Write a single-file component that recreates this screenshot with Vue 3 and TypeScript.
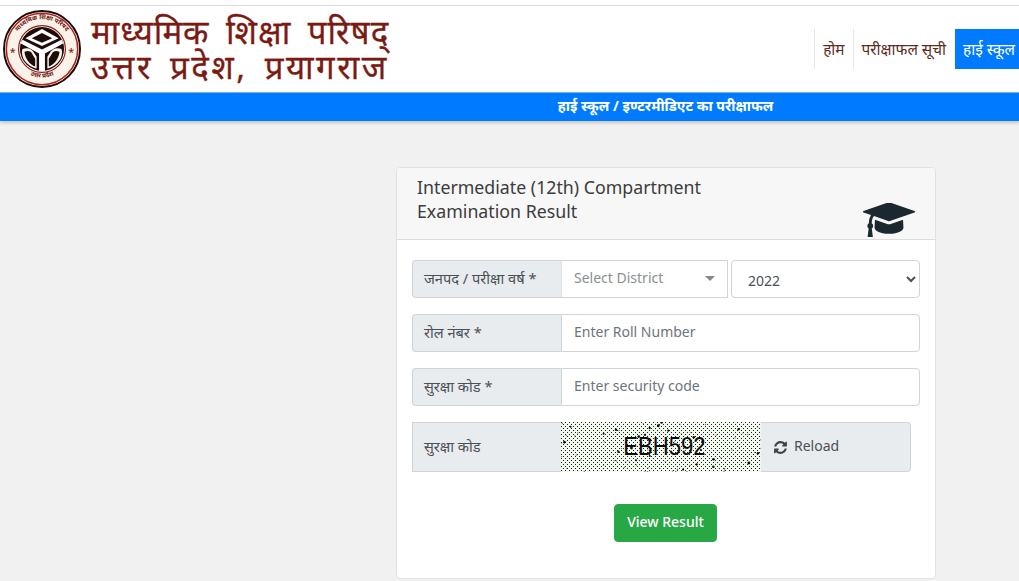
<script setup lang="ts">
import { computed } from 'vue'

type Speck = { x: number; y: number; r: number; o: number }

const specks = computed<Speck[]>(() => {
  const list: Speck[] = []
  let seed = 592
  const rnd = () => {
    seed = (seed * 16807) % 2147483647
    return seed / 2147483647
  }
  for (let i = 0; i < 90; i++) {
    const big = rnd() > 0.72
    list.push({ x: rnd() * 200, y: rnd() * 50, r: big ? 1.0 + rnd() * 0.5 : 0.7, o: big ? 1 : 0.5 })
  }
  return list
})
</script>

<template>
  <div class="page">
    <div class="topline"></div>
    <header class="masthead">
      <div class="brand">
        <svg class="emblem" viewBox="0 0 80 80" aria-hidden="true">
          <circle cx="40" cy="40" r="39" fill="#fff" stroke="#1c0c0a" stroke-width="2" />
          <circle cx="40" cy="40" r="36.6" fill="#fbf3ea" stroke="#b0241c" stroke-width="1.6" />
          <defs>
            <path id="arcTop" d="M9.500 40a30.500 30.500 0 0 1 61 0" />
            <path id="arcBottom" d="M11 47a30 30 0 0 0 58 0" />
          </defs>
          <text class="emblem-text"><textPath href="#arcTop" startOffset="50%" text-anchor="middle">माध्यमिक शिक्षा परिषद</textPath></text>
          <text class="emblem-text"><textPath href="#arcBottom" startOffset="50%" text-anchor="middle">उत्तर प्रदेश</textPath></text>
          <text x="7" y="47" class="star">*</text>
          <text x="67" y="47" class="star">*</text>
          <circle cx="40" cy="40" r="24" fill="#fff" stroke="#8c1a14" stroke-width="1.2" />
          <circle cx="40" cy="40" r="22.6" fill="#1d0d0a" />
          <path d="M23 29 40 19.500 57 29 40 37Z" fill="#fff" />
          <path d="M29.500 29 40 23.500 50.500 29 40 33.500Z" fill="#1d0d0a" />
          <path d="M18 34 37 44.500V62.500H43V44.500L62 34 60 30.500 40 40.500 20 30.500Z" fill="#fff" />
          <path d="M20 40c5-2 10 0 12 4l2.500 4v12c-6-1-12-6-14-11-1-3-1.500-6-.5-9Z" fill="#fbf3ea" />
          <path d="M60 40c-5-2-10 0-12 4l-2.500 4v12c6-1 12-6 14-11 1-3 1.500-6 .5-9Z" fill="#fbf3ea" />
          <path d="M22 43c3-2 7-1 8 2l3 5v8c-5-2-10-7-11-15ZM58 43c-3-2-7-1-8 2l-3 5v8c5-2 10-7 11-15Z" fill="#1d0d0a" />
        </svg>
        <div class="brand-name">
          <div class="brand-line first">माध्यमिक शिक्षा परिषद्</div>
          <div class="brand-line second">उत्तर प्रदेश, प्रयागराज</div>
        </div>
      </div>
      <nav class="nav">
        <a class="nav-item">होम</a>
        <a class="nav-item">परीक्षाफल सूची</a>
        <a class="nav-item active">हाई स्कूल</a>
      </nav>
    </header>
    <div class="banner"><span>हाई स्कूल / इण्टरमीडिएट का परीक्षाफल</span></div>

    <main class="main">
      <section class="card">
        <div class="card-head">
          <h1 class="card-title">Intermediate (12th) Compartment<br />Examination Result</h1>
          <svg class="cap" viewBox="0 160 2304 1376" preserveAspectRatio="none" aria-hidden="true">
            <path d="M1774 836l18 316q4 69-82 128t-235 93.500-323 34.500-323-34.500-235-93.500-82-128l18-316 574 181q22 7 48 7t48-7zm530-324q0 23-22 31l-1120 352q-4 1-10 1t-10-1l-652-206q-43 34-71 111.500t-34 178.500q63 36 63 109 0 69-58 107l58 433q2 14-8 25-9 11-24 11h-192q-15 0-24-11-10-11-8-25l58-433q-58-38-58-107 0-73 65-111 11-207 98-330l-333-104q-22-8-22-31t22-31l1120-352q4-1 10-1t10 1l1120 352q22 8 22 31z" />
          </svg>
        </div>
        <form class="card-body" @submit.prevent>
          <div class="row">
            <label class="addon">जनपद / परीक्षा वर्ष *</label>
            <div class="fake-select">
              <span>Select District</span>
              <i class="caret"></i>
            </div>
            <select class="year">
              <option>2022</option>
            </select>
          </div>
          <div class="row">
            <label class="addon">रोल नंबर *</label>
            <input class="field" placeholder="Enter Roll Number" />
          </div>
          <div class="row">
            <label class="addon">सुरक्षा कोड *</label>
            <input class="field" placeholder="Enter security code" />
          </div>
          <div class="row captcha-row">
            <label class="addon plain">सुरक्षा कोड</label>
            <div class="captcha">
              <svg class="specks" width="200" height="50" viewBox="0 0 200 50" aria-hidden="true">
                <defs>
                  <pattern id="captchaDots" width="4" height="4" patternUnits="userSpaceOnUse">
                    <rect x="0" y="0" width="1" height="1" fill="#16251a" />
                    <rect x="2" y="2" width="1" height="1" fill="#16251a" />
                  </pattern>
                </defs>
                <rect width="200" height="50" fill="url(#captchaDots)" />
                <circle v-for="(s, i) in specks" :key="i" :cx="s.x" :cy="s.y" :r="s.r" :opacity="s.o" fill="#111" />
              </svg>
              <span class="captcha-code">EBH592</span>
            </div>
            <div class="reload">
              <svg class="reload-icon" viewBox="0 0 1792 1792" aria-hidden="true">
                <path d="M1639 1056q0 5-1 7-64 268-268 434.500t-478 166.500q-146 0-282.500-55t-243.500-157l-129 129q-19 19-45 19t-45-19-19-45v-448q0-26 19-45t45-19h448q26 0 45 19t19 45-19 45l-137 137q71 66 161 102t187 36q134 0 250-65t186-179q11-17 53-117 8-23 30-23h192q13 0 22.500 9.500t9.500 22.500zm25-800v448q0 26-19 45t-45 19h-448q-26 0-45-19t-19-45 19-45l138-138q-148-137-349-137-134 0-250 65t-186 179q-11 17-53 117-8 23-30 23h-199q-13 0-22.500-9.500t-9.500-22.500v-7q65-268 270-434.500t480-166.500q146 0 284 55.500t245 156.500l130-129q19-19 45-19t45 19 19 45z" />
              </svg>
              <span>Reload</span>
            </div>
          </div>
          <div class="actions">
            <button class="submit" type="submit">View Result</button>
          </div>
        </form>
      </section>
    </main>
  </div>
</template>

<style>
html,
body {
  margin: 0;
  background: #f1f1f1;
  overflow: hidden;
}
</style>

<style scoped>
.page {
  width: 1019px;
  height: 581px;
  overflow: hidden;
  background: #f1f1f1;
  font-family: "Noto Sans", "Open Sans", "Noto Sans CJK SC", sans-serif;
  color: #495057;
}
.topline {
  height: 5px;
  background: #fff;
  border-bottom: 1px solid #dcdcdc;
}
.masthead {
  height: 86px;
  background: #fff;
  display: flex;
  align-items: center;
  justify-content: space-between;
  border-bottom: 1px solid #7ab4e8;
}
.brand {
  display: flex;
  align-items: center;
  gap: 10px;
  padding-left: 3px;
}
.emblem {
  width: 78px;
  height: 78px;
  flex: none;
}
.emblem-text {
  font-size: 6.4px;
  font-weight: 700;
  fill: #6b1510;
}
.star {
  font-size: 11px;
  fill: #6b1510;
}
.brand-name {
  width: 300px;
  color: #7a1a12;
  font-size: 33px;
  line-height: 35px;
  -webkit-text-stroke: 0.3px #7a1a12;
}
.brand-line {
  white-space: nowrap;
}
.brand-line.first {
  letter-spacing: 1px;
  word-spacing: 7px;
}
.brand-line.second {
  letter-spacing: 2.5px;
  word-spacing: 6px;
}
.nav {
  display: flex;
  align-items: stretch;
  height: 40px;
}
.nav-item {
  display: flex;
  align-items: center;
  padding: 0 8px;
  font-size: 15.4px;
  color: #5d2c22;
  border-left: 1px solid #e6e6e6;
  white-space: nowrap;
}
.nav-item.active {
  background: #007bff;
  color: #fff;
  border-left: 0;
  margin-left: 1px;
  padding-right: 4px;
}
.banner {
  height: 28px;
  background: #007bff;
  color: #fff;
  font-size: 14.2px;
  font-weight: 700;
  display: flex;
  align-items: center;
  justify-content: center;
  padding-left: 312px;
  box-shadow: 0 2px 3px rgba(0, 0, 0, 0.18);
}
.banner span {
  margin-top: -3px;
}
.main {
  padding: 46px 0 0 396px;
}
.card {
  width: 538px;
  height: 410px;
  background: #fff;
  border: 1px solid #e1e1e1;
  border-radius: 4px;
}
.card-head {
  padding: 7px 20px 0;
  height: 64px;
  background: #f7f7f7;
  border-bottom: 1px solid #dcdcdc;
  border-radius: 4px 4px 0 0;
  display: flex;
  justify-content: space-between;
}
.card-title {
  margin: 0;
  font-size: 17.75px;
  font-weight: 400;
  line-height: 24px;
  color: #3c3c3c;
}
.cap {
  width: 52px;
  height: 34px;
  margin-top: 28px;
  fill: #1c2830;
}
.card-body {
  padding: 20px 15px 0;
  display: flex;
  flex-direction: column;
  gap: 16px;
}
.row {
  display: flex;
  height: 38px;
  width: 508px;
}
.addon {
  width: 149px;
  box-sizing: border-box;
  padding: 0 11px 3px;
  display: flex;
  align-items: center;
  background: #e9ecef;
  border: 1px solid #ced4da;
  border-right: 0;
  border-radius: 4px 0 0 4px;
  font-size: 14.6px;
  color: #495057;
  white-space: nowrap;
}
.fake-select {
  width: 167px;
  box-sizing: border-box;
  padding: 0 12px 3px;
  display: flex;
  align-items: center;
  justify-content: space-between;
  background: #fff;
  border: 1px solid #ced4da;
  border-left-color: #e1e1e1;
  font-size: 14px;
  color: #8a8f94;
}
.caret {
  width: 0;
  height: 0;
  margin-top: 1px;
  border-left: 5px solid transparent;
  border-right: 5px solid transparent;
  border-top: 5px solid #888;
}
.year {
  width: 189px;
  margin-left: 3px;
  box-sizing: border-box;
  padding: 2px 12px 0;
  background: #fff;
  border: 1px solid #ced4da;
  border-radius: 4px;
  font: inherit;
  font-size: 14px;
  color: #495057;
}
.field {
  flex: 1;
  min-width: 0;
  box-sizing: border-box;
  padding: 0 12px 3px;
  background: #fff;
  border: 1px solid #ced4da;
  border-radius: 0 4px 4px 0;
  font: inherit;
  font-size: 14px;
  color: #495057;
}
.field::placeholder {
  color: #6c757d;
  opacity: 1;
}
.captcha-row {
  height: 50px;
  width: 499px;
}
.addon.plain {
  border-radius: 0;
  border-right: 0;
}
.captcha {
  position: relative;
  width: 200px;
  flex: none;
  display: flex;
  align-items: center;
  justify-content: center;
  background-color: #f3f8ee;
  overflow: hidden;
}
.specks {
  position: absolute;
  top: 0;
  left: 0;
}
.captcha-code {
  position: relative;
  font-family: "Liberation Sans", sans-serif;
  font-size: 26px;
  color: #0c0c0c;
  transform: scaleX(0.85);
  margin-left: 7px;
  margin-top: -2px;
}
.reload {
  flex: 1;
  display: flex;
  align-items: center;
  gap: 6px;
  padding: 0 0 3px 12px;
  background: #e9ecef;
  border: 1px solid #ced4da;
  border-left: 0;
  border-radius: 0 4px 4px 0;
  font-size: 14px;
  color: #495057;
}
.reload-icon {
  width: 15px;
  height: 15px;
  margin-top: 3px;
  fill: #3d4449;
}
.actions {
  display: flex;
  justify-content: center;
  margin-top: 16px;
  padding-right: 1px;
}
.submit {
  width: 103px;
  height: 38px;
  padding: 0 0 3px;
  background: #28a745;
  border: 1px solid #28a745;
  border-radius: 4px;
  color: #fff;
  font: inherit;
  font-size: 14px;
  font-weight: 500;
}
</style>
